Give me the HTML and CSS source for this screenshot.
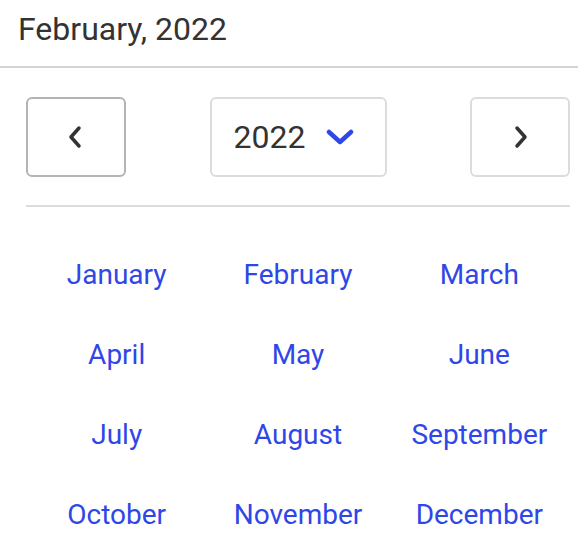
FILE: index.html
```html
<!DOCTYPE html>
<html lang="en">
<head>
    <meta charset="UTF-8">
    <meta name="viewport" content="width=device-width, initial-scale=1.0">
    <title>Month Picker</title>
    <link rel="stylesheet" href="styles.css">
</head>
<body>
    <div class="picker-header">February, 2022</div>

    <div class="picker-body">
        <div class="picker-nav">
            <button class="nav-btn nav-btn-active" aria-label="Previous year">
                <svg width="16" height="24" viewBox="0 0 16 24">
                    <path d="M11 3 L3 12 L11 21" fill="none" stroke="#333" stroke-width="3.5" stroke-linecap="round" stroke-linejoin="round"/>
                </svg>
            </button>
            <div class="year-select">
                <span>2022</span>
                <svg width="28" height="18" viewBox="0 0 28 18">
                    <path d="M3 4 L14 14 L25 4" fill="none" stroke="#2f46e8" stroke-width="4.5" stroke-linecap="round" stroke-linejoin="round"/>
                </svg>
            </div>
            <button class="nav-btn" aria-label="Next year">
                <svg width="16" height="24" viewBox="0 0 16 24">
                    <path d="M5 3 L13 12 L5 21" fill="none" stroke="#333" stroke-width="3.5" stroke-linecap="round" stroke-linejoin="round"/>
                </svg>
            </button>
        </div>

        <div class="month-grid">
            <a href="#">January</a>
            <a href="#">February</a>
            <a href="#">March</a>
            <a href="#">April</a>
            <a href="#">May</a>
            <a href="#">June</a>
            <a href="#">July</a>
            <a href="#">August</a>
            <a href="#">September</a>
            <a href="#">October</a>
            <a href="#">November</a>
            <a href="#">December</a>
        </div>
    </div>
</body>
</html>
```

FILE: styles.css
```css
body {
    margin: 0;
    font-family: Roboto, "Liberation Sans", sans-serif;
    background-color: #fff;
    color: #333;
}
.picker-header {
    height: 66px;
    line-height: 58px;
    padding-left: 18px;
    font-size: 32px;
    border-bottom: 2px solid #d4d4d4;
}
.picker-body {
    padding: 29px 8px 0 26px;
}
.picker-nav {
    display: flex;
    justify-content: space-between;
    align-items: center;
    padding-bottom: 28px;
    border-bottom: 2px solid #dcdcdc;
}
.nav-btn {
    width: 100px;
    height: 80px;
    display: flex;
    align-items: center;
    justify-content: center;
    background: #fff;
    border: 2px solid #dcdcdc;
    border-radius: 6px;
    padding: 0;
}
.nav-btn-active {
    border-color: #b4b4b4;
}
.year-select {
    width: 177px;
    height: 80px;
    box-sizing: border-box;
    display: flex;
    align-items: center;
    gap: 21px;
    border: 2px solid #dcdcdc;
    border-radius: 6px;
    font-size: 32px;
    padding-left: 22px;
}
.month-grid {
    display: grid;
    grid-template-columns: repeat(3, 1fr);
    grid-auto-rows: 80px;
    margin-top: 27px;
}
.month-grid a {
    display: flex;
    align-items: center;
    justify-content: center;
    color: #2f46e8;
    text-decoration: none;
    font-size: 28px;
}
```
